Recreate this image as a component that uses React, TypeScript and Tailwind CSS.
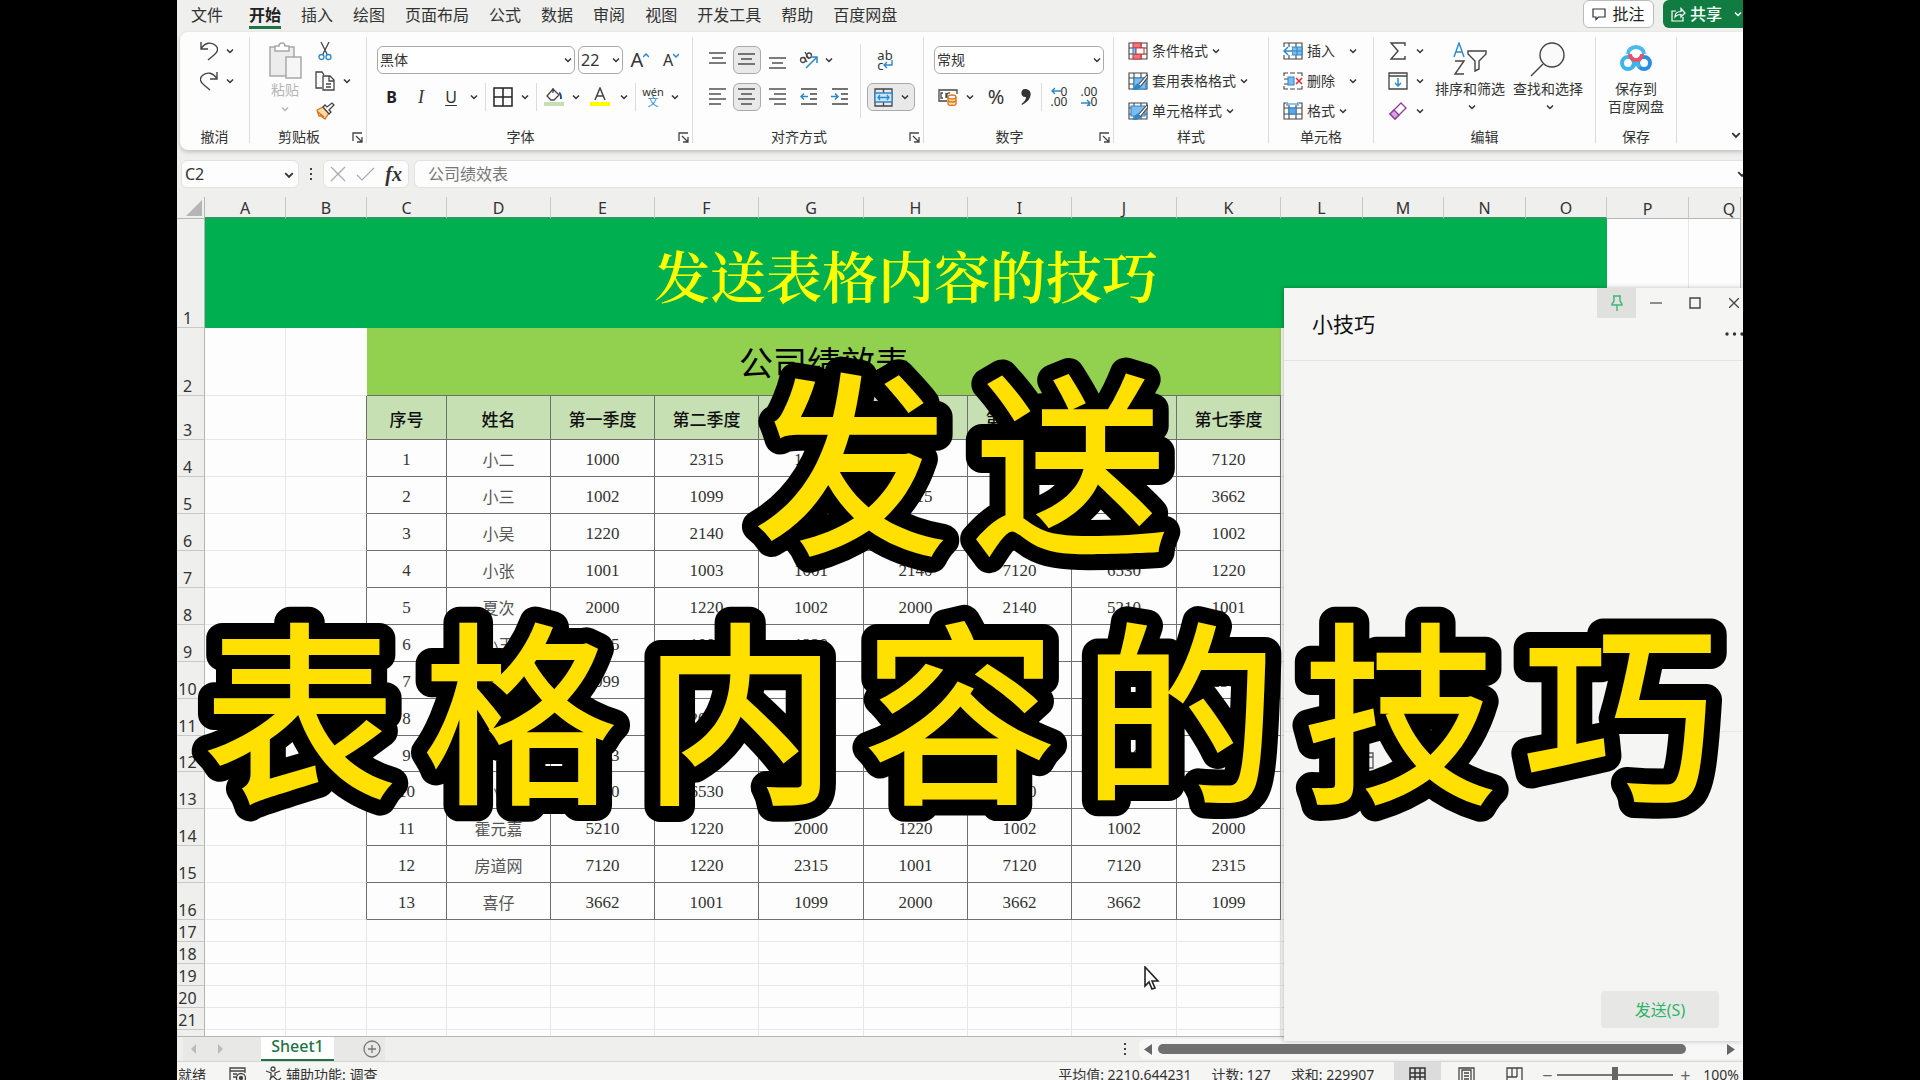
import type { ReactNode } from "react";

const MENU = ["开始", "插入", "绘图", "页面布局", "公式", "数据", "审阅", "视图", "开发工具", "帮助", "百度网盘"];

const COLUMNS = [
  { name: "A", w: 81 }, { name: "B", w: 81 }, { name: "C", w: 80 }, { name: "D", w: 104 },
  { name: "E", w: 104 }, { name: "F", w: 104 }, { name: "G", w: 105 }, { name: "H", w: 104 },
  { name: "I", w: 104 }, { name: "J", w: 105 }, { name: "K", w: 104 }, { name: "L", w: 82 },
  { name: "M", w: 81 }, { name: "N", w: 82 }, { name: "O", w: 81 }, { name: "P", w: 82 }, { name: "Q", w: 81 },
];

const HEADINGS = ["序号", "姓名", "第一季度", "第二季度", "第三季度", "第四季度", "第五季度", "第六季度", "第七季度"];

const RECORDS = [
  ["1", "小二", "1000", "2315", "1000", "2315", "1000", "2315", "7120"],
  ["2", "小三", "1002", "1099", "1002", "2315", "1002", "1099", "3662"],
  ["3", "小吴", "1220", "2140", "1220", "1099", "3662", "7120", "1002"],
  ["4", "小张", "1001", "1003", "1001", "2140", "7120", "6530", "1220"],
  ["5", "夏次", "2000", "1220", "1002", "2000", "2140", "5210", "1001"],
  ["6", "小王", "2315", "1002", "1220", "2315", "1003", "7120", "2000"],
  ["7", "小李", "1099", "1001", "1001", "1099", "1220", "3662", "2315"],
  ["8", "小赵", "2140", "2000", "2000", "2140", "1002", "1002", "1099"],
  ["9", "小孙", "1003", "2315", "2315", "1003", "1001", "1220", "2140"],
  ["10", "小周", "6530", "6530", "1099", "6530", "2000", "1001", "1003"],
  ["11", "霍元嘉", "5210", "1220", "2000", "1220", "1002", "1002", "2000"],
  ["12", "房道网", "7120", "1220", "2315", "1001", "7120", "7120", "2315"],
  ["13", "喜仔", "3662", "1001", "1099", "2000", "3662", "3662", "1099"],
];

const INK = "#444444";
const BLUE = "#2b88c9";

export default function App() {
  return (
    <div className="h-screen overflow-hidden bg-black px-[177px] font-['Noto_Sans','Noto_Sans_CJK_SC',sans-serif] text-[#333]">
      <div className="relative flex h-full flex-col overflow-hidden bg-[#efefee]">
        <MenuBar />
        <Ribbon />
        <FormulaBar />
        <Sheet />
        <SheetTabs />
        <StatusBar />
        <ChatWindow />
        <svg className="absolute top-[966px] left-[967px] z-10" width="17" height="24" viewBox="0 0 17 24">
          <path d="M1 1v19l4-4 3 7 3-1-3-7h6z" fill="#fff" stroke="#222" strokeWidth="1.6" />
        </svg>
      </div>
      <Caption />
    </div>
  );
}

// Big outlined caption; svg text because css text strokes cannot have round joins
function Caption() {
  return (
    <svg viewBox="0 0 1920 1080" textAnchor="middle" fontSize="196"
      className="pointer-events-none absolute inset-0 z-20 h-full w-full fill-[#ffe000] stroke-black font-['Noto_Sans_CJK_SC_Medium','Noto_Sans_CJK_SC',sans-serif] [paint-order:stroke] [stroke-linejoin:round] [stroke-width:32px]">
      <text y="539" x="851 1071">发送</text>
      <text y="788" x="300 520 740 960 1180 1400 1620">表格内容的技巧</text>
    </svg>
  );
}

function Caret({ className = "", size = 8 }: { className?: string; size?: number }) {
  return (
    <svg className={`shrink-0 ${className}`} width={size} height={size} viewBox="0 0 8 8" fill="none" stroke="currentColor" strokeWidth="1.5">
      <path d="M1 2.5l3 3 3-3" />
    </svg>
  );
}

function MenuBar() {
  return (
    <div className="flex h-8 shrink-0 items-start text-base">
      <nav className="flex gap-5 pl-[14px] leading-[30px]">
        <a href="#file" className="mr-[6px]">文件</a>
        {MENU.map((m, i) => (
          <a key={m} href={`#${m}`}
            className={i === 0 ? "h-[29px] border-b-[3px] border-[#217346] font-bold text-[#222]" : ""}>
            {m}
          </a>
        ))}
      </nav>
      <div className="ml-auto flex gap-[9px]">
        <button className="flex h-7 w-[71px] items-center justify-center gap-[6px] rounded-md border border-[#bbb] bg-white text-[#222]">
          <svg width="14" height="14" viewBox="0 0 14 14" fill="none" stroke="#333" strokeWidth="1.2">
            <path d="M1 2h12v8H6.500L4 12.500V10H1z" />
          </svg>
          批注
        </button>
        <button className="flex h-7 w-[80px] items-center gap-1 rounded-l-md bg-[#107c41] pl-2 font-medium whitespace-nowrap text-white">
          <svg className="shrink-0" width="15" height="15" viewBox="0 0 15 15" fill="none" stroke="#fff" strokeWidth="1.2">
            <path d="M5 4H1v10h11v-4M4 10c0-4 3-5.500 6-5.500V1.500l4 4.500-4 4V7.500C7.500 7.500 5.500 8 4 10z" />
          </svg>
          共享
          <Caret className="ml-2" />
        </button>
      </div>
    </div>
  );
}

function Group({ label, launcher, className, pad = "", children }: {
  label: string; launcher?: boolean; className: string; pad?: string; children: ReactNode;
}) {
  return (
    <section className={`flex h-[106px] shrink-0 flex-col border-r border-[#dcdcdc] ${className}`}>
      <div className={`flex-1 ${pad}`}>{children}</div>
      <div className="flex h-3 items-center">
        <span className={`flex-1 text-center leading-3 ${launcher ? "pr-1" : ""}`}>{label}</span>
        {launcher && (
          <button aria-label={`${label}设置`} className="mr-px h-[11px] w-[13px]">
            <svg width="11" height="11" viewBox="0 0 11 11" fill="none" stroke="#444" strokeWidth="1.3">
              <path d="M1 9V1h9M4 4l6 6M10 5v5H5" />
            </svg>
          </button>
        )}
      </div>
    </section>
  );
}

function Tool({ label, w, on, children }: { label: string; w: string; on?: boolean; children: ReactNode }) {
  return (
    <button aria-label={label}
      className={`flex h-7 shrink-0 items-center justify-center rounded-md ${w} ${on ? "border border-[#aaa] bg-[#e9e9e9]" : ""}`}>
      {children}
    </button>
  );
}

function Rule({ className = "mx-[3px]" }: { className?: string }) {
  return <div className={`h-7 w-px shrink-0 bg-[#dcdcdc] ${className}`} />;
}

function Lines({ rows }: { rows: [number, number, number][] }) {
  return (
    <svg width="18" height="18" viewBox="0 0 18 18" stroke={INK} strokeWidth="1.4">
      {rows.map(([x1, x2, y]) => <path key={y} d={`M${x1} ${y}H${x2}`} />)}
    </svg>
  );
}

function GridIcon({ kind }: { kind: "cond" | "table" | "cell" | "insert" | "delete" | "format" }) {
  return (
    <svg width="20" height="18" viewBox="0 0 20 18" fill="none" stroke={INK} strokeWidth="1.1" className="shrink-0">
      {kind !== "delete" && <path d="M1 1h18v16H1zM6 1v16M13 1v16M1 6h18M1 12h18" />}
      {kind === "cond" && (
        <>
          <path d="M5 1h8v5H5zM5 12h8v5H5z" fill="#f2777a" stroke="#d13438" />
          <path d="M5 6h3v6H5z" fill="#8ec3ec" stroke={BLUE} />
          <path d="M8 6h8v6H8z" fill="#fff" stroke="#d13438" />
        </>
      )}
      {(kind === "table" || kind === "cell") && (
        <>
          <path d={kind === "table" ? "M6 6h12v11H6z" : "M3 4h14v10H3z"} fill="#7dbcec" stroke={BLUE} />
          <path d="M19 3l-9 10 2 2 8-10z" fill="#fff" stroke={INK} />
          <path d="M10 12c-3 0-2 4-5 5 3 1 7 0 7-3z" fill={BLUE} stroke={BLUE} />
        </>
      )}
      {kind === "insert" && (
        <>
          <path d="M9 5h10v8H9zM14 5v8M9 9h10" fill="#7dbcec" stroke={BLUE} />
          <path d="M0 5h9v8H0z" fill="#fff" stroke="none" />
          <path d="M9 9H1M5 5L1 9l4 4" stroke={BLUE} strokeWidth="1.5" />
        </>
      )}
      {kind === "delete" && (
        <>
          <path d="M1 4V1h4M7 1h5M14 1h5v3M1 14v3h4M7 17h5M14 17h5v-3M1 7h4M1 12h4" />
          <path d="M5 5h6v8H5z" fill="#7dbcec" stroke={BLUE} />
          <path d="M13 6l6 6M19 6l-6 6" stroke="#e03030" strokeWidth="1.6" />
        </>
      )}
      {kind === "format" && (
        <>
          <path d="M6 6h7v6H6z" fill="#5aa9e6" stroke={BLUE} />
          <path d="M3 0h13v3H3z" fill="#fff" stroke="none" />
          <path d="M4 0v4M15 0v4M4 2h11" stroke={BLUE} />
        </>
      )}
    </svg>
  );
}

function GridTool({ kind, text, wide }: { kind: "cond" | "table" | "cell" | "insert" | "delete" | "format"; text: string; wide?: boolean }) {
  return (
    <button className="flex h-[30px] items-center">
      <GridIcon kind={kind} />
      <span className="ml-1">{text}</span>
      <Caret className={wide ? "ml-[14px]" : "ml-1"} />
    </button>
  );
}

function Combo({ label, value, className }: { label: string; value: string; className: string }) {
  return (
    <div className={`relative h-7 shrink-0 ${className}`}>
      <select aria-label={label} className="h-full w-full appearance-none rounded-md border border-[#aaa] bg-white px-[2px] text-[#333]">
        <option>{value}</option>
      </select>
      <Caret className="pointer-events-none absolute top-[10px] right-[3px]" />
    </div>
  );
}

function Ribbon() {
  return (
    <div className="ml-[3px] flex h-[118px] shrink-0 rounded-l-lg bg-[#fdfdfd] pt-[5px] text-sm shadow-[0_2px_4px_rgba(0,0,0,0.2)]">
      <Group label="撤消" className="w-[70px]">
        <div className="-mt-px flex h-[30px] items-center gap-2 pl-5">
          <Tool label="撤消" w="w-[18px]">
            <svg width="18" height="20" viewBox="0 0 18 20" fill="none" stroke={INK} strokeWidth="1.4">
              <path d="M1 1v7h7M1 8c4-7 10-7 14-4s3 7-1 10l-6 5" />
            </svg>
          </Tool>
          <Caret />
        </div>
        <div className="flex h-[30px] items-center gap-2 pl-5">
          <Tool label="恢复" w="w-[18px]">
            <svg width="18" height="20" viewBox="0 0 18 20" fill="none" stroke={INK} strokeWidth="1.4">
              <path d="M17 1v7h-7M17 8C13 1 7 1 3 4s-3 7 1 10l6 5" />
            </svg>
          </Tool>
          <Caret />
        </div>
      </Group>

      <Group label="剪贴板" launcher className="w-[117px]">
        <div className="flex pl-[19px]">
          <button className="mt-[5px] flex w-8 flex-col items-center text-[#b5b5b5]">
            <svg width="33" height="37" viewBox="0 0 33 37" fill="#ececec" stroke="#a8a8a8" strokeWidth="1.5">
              <path d="M1 5h24v29H1z" />
              <path d="M6 9V4h4c0-4 6-4 6 0h4v5z" fill="#fff" />
              <path d="M17 15h15v21H17z" fill="#f6f6f6" />
            </svg>
            <span className="mt-[2px] w-8 text-center leading-[18px]">粘贴</span>
            <Caret className="mt-[6px]" />
          </button>
          <div className="-mt-px ml-[14px] flex flex-col">
            <div className="flex h-[30px] items-center">
              <Tool label="剪切" w="w-5">
                <svg width="14" height="20" viewBox="0 0 14 20" fill="none" stroke={INK} strokeWidth="1.3">
                  <path d="M3 1l6.500 13M11 1L4.500 14" />
                  <circle cx="3.500" cy="16" r="2.500" stroke={BLUE} />
                  <circle cx="10.500" cy="16" r="2.500" stroke={BLUE} />
                </svg>
              </Tool>
            </div>
            <div className="flex h-[30px] items-center gap-2">
              <Tool label="复制" w="w-5">
                <svg width="20" height="20" viewBox="0 0 20 20" fill="none" stroke={INK} strokeWidth="1.3">
                  <path d="M7 17H1V1h6l2 3M8 5h7l4 4v10H8zM14 5v5h5M11 13h5M11 16h5" />
                </svg>
              </Tool>
              <Caret />
            </div>
            <div className="flex h-[30px] items-center">
              <Tool label="格式刷" w="w-5">
                <svg width="20" height="18" viewBox="0 0 20 18" fill="none" strokeWidth="1.3">
                  <path d="M2 8l6-3 6 6-4 6-4-3-2 0z" fill="#fbd9a8" stroke="#d9741a" />
                  <path d="M5 12l3 3M3 10l6 5" stroke="#d9741a" />
                  <path d="M8 5l2-2 2 2 5-4 2 2-5 5 2 2-2 2z" fill="#fff" stroke={INK} />
                </svg>
              </Tool>
            </div>
          </div>
        </div>
      </Group>

      <Group label="字体" launcher className="w-[326px]" pad="pl-[10px]">
        <div className="mt-[9px] flex items-center gap-[3px]">
          <Combo label="字体" value="黑体" className="w-[198px]" />
          <Combo label="字号" value="22" className="w-[45px] text-base" />
          <Tool label="增大字号" w="w-7">
            <span className="text-xl leading-7">A</span>
            <svg width="6" height="14" viewBox="0 0 6 14" fill="none" stroke={BLUE} strokeWidth="1.5"><path d="M0 4l3-3 3 3" /></svg>
          </Tool>
          <Tool label="减小字号" w="w-7">
            <span className="text-base leading-7">A</span>
            <svg width="6" height="14" viewBox="0 0 6 14" fill="none" stroke={BLUE} strokeWidth="1.5"><path d="M0 1l3 3 3-3" /></svg>
          </Tool>
        </div>
        <div className="mt-[9px] flex items-center">
          <Tool label="加粗" w="w-[29px]"><b className="text-base text-[#222]">B</b></Tool>
          <Tool label="倾斜" w="w-[30px]"><i className="font-['Liberation_Serif',serif] text-lg">I</i></Tool>
          <Tool label="下划线" w="w-[30px]"><u className="text-base underline-offset-2">U</u></Tool>
          <Caret className="mx-1" />
          <Rule />
          <Tool label="边框" w="w-7">
            <svg width="20" height="20" viewBox="0 0 20 20" fill="none" stroke="#222" strokeWidth="1.5"><path d="M1 1h18v18H1zM10 1v18M1 10h18" /></svg>
          </Tool>
          <Caret className="mx-1" />
          <Rule />
          <Tool label="填充颜色" w="w-7">
            <svg width="20" height="20" viewBox="0 0 20 20" fill="none" stroke={INK} strokeWidth="1.3">
              <path d="M9 1v5M9 2l6 6-5 5H7L3 9z" />
              <path d="M15 6c2 0 2 3 2 6" stroke="#1d4f91" strokeWidth="2" />
              <path d="M0 15h20v4H0z" fill="#c6e0b4" stroke="none" />
            </svg>
          </Tool>
          <Caret className="mx-1" />
          <Tool label="字体颜色" w="w-8">
            <svg width="20" height="20" viewBox="0 0 20 20" fill="none" stroke={INK} strokeWidth="1.5">
              <path d="M5 13L10 1l5 12M6.500 9h7" />
              <path d="M0 15h20v4H0z" fill="#ffff00" stroke="none" />
            </svg>
          </Tool>
          <Caret className="mx-1" />
          <Rule />
          <Tool label="拼音" w="w-7">
            <span className="flex flex-col text-center text-[11px] leading-[10px]">
              <span>wén</span><span className="text-[#2b88c9]">文</span>
            </span>
          </Tool>
          <Caret className="ml-1" />
        </div>
      </Group>

      <Group label="对齐方式" launcher className="w-[231px]" pad="pl-[10px]">
        <div className="flex">
          <div>
            <div className="mt-[9px] flex items-center">
              <Tool label="顶端对齐" w="w-[30px]"><Lines rows={[[0, 17, 2], [3, 14, 7], [0, 17, 12]]} /></Tool>
              <Tool label="垂直居中" w="w-7" on><Lines rows={[[0, 17, 3], [3, 14, 8], [0, 17, 13]]} /></Tool>
              <Tool label="底端对齐" w="w-[34px]"><Lines rows={[[0, 17, 7], [3, 14, 12], [0, 17, 17]]} /></Tool>
              <Tool label="方向" w="w-7">
                <svg width="20" height="18" viewBox="0 0 20 18" fill="none" stroke={INK} strokeWidth="1.3">
                  <circle cx="4" cy="9" r="2.500" /><path d="M5 6l3 5M6 1l4 7" /><circle cx="10" cy="4.500" r="2.500" />
                  <path d="M7 17L18 6M12 6h6v6" stroke={BLUE} strokeWidth="1.5" />
                </svg>
              </Tool>
              <Caret className="ml-[2px]" />
            </div>
            <div className="mt-[9px] flex items-center">
              <Tool label="左对齐" w="w-[30px]"><Lines rows={[[0, 17, 1], [0, 12, 6], [0, 17, 11], [0, 12, 16]]} /></Tool>
              <Tool label="居中" w="w-7" on><Lines rows={[[0, 17, 1], [3, 14, 6], [0, 17, 11], [3, 14, 16]]} /></Tool>
              <Tool label="右对齐" w="w-[34px]"><Lines rows={[[0, 17, 1], [5, 17, 6], [0, 17, 11], [5, 17, 16]]} /></Tool>
              <Tool label="减少缩进" w="w-7">
                <svg width="18" height="18" viewBox="0 0 18 18" fill="none" stroke={INK} strokeWidth="1.3">
                  <path d="M1 1h16M10 6h7M10 11h7M1 16h16" /><path d="M8 8.500H1M4 5.500l-3 3 3 3" stroke={BLUE} strokeWidth="1.5" />
                </svg>
              </Tool>
              <Tool label="增加缩进" w="w-[34px]">
                <svg width="18" height="18" viewBox="0 0 18 18" fill="none" stroke={INK} strokeWidth="1.3">
                  <path d="M1 1h16M10 6h7M10 11h7M1 16h16" /><path d="M0 8.500h7M4 5.500l3 3-3 3" stroke={BLUE} strokeWidth="1.5" />
                </svg>
              </Tool>
            </div>
          </div>
          <div className="mt-[7px] ml-[3px] h-[74px] w-px bg-[#dcdcdc]" />
          <div className="ml-[6px]">
            <div className="mt-[9px] flex pl-2">
              <Tool label="自动换行" w="w-5">
                <span className="relative flex flex-col text-left text-[13px] leading-[10px]">
                  <span>ab</span><span>c</span>
                  <svg className="absolute right-0 bottom-0" width="10" height="10" viewBox="0 0 10 10" fill="none" stroke={BLUE} strokeWidth="1.4"><path d="M9 0v5H1M4 2L1 5l3 3" /></svg>
                </span>
              </Tool>
            </div>
            <div className="mt-[9px] flex">
              <Tool label="合并后居中" w="w-12" on>
                <svg width="19" height="19" viewBox="0 0 19 19" fill="none" stroke={INK} strokeWidth="1.3">
                  <path d="M1 1h17v17H1zM9.500 1v4M9.500 14v4" />
                  <path d="M1 5h17v9H1z" fill="#cfe6f8" stroke={BLUE} /><path d="M4 9.500h11M6 7L4 9.500 6 12M13 7l2 2.500-2 2.500" stroke={BLUE} />
                </svg>
                <Caret className="ml-2" />
              </Tool>
            </div>
          </div>
        </div>
      </Group>

      <Group label="数字" launcher className="w-[190px]" pad="pl-[10px]">
        <div className="mt-[9px] flex"><Combo label="数字格式" value="常规" className="w-[170px]" /></div>
        <div className="mt-[9px] flex items-center">
          <Tool label="会计数字格式" w="w-7">
            <svg width="20" height="18" viewBox="0 0 20 18" fill="none" stroke={INK} strokeWidth="1.3">
              <path d="M9 13H1V2h18v4M5 5H3v5h2M12 5c-4-1-4 5-1 5M8 5v5" />
              <path d="M10 9v7c0 2 8 2 8 0V9" fill="#fbd9a8" stroke="#d9741a" /><ellipse cx="14" cy="9" rx="4" ry="2" fill="#fff" stroke="#d9741a" /><path d="M10 12.500c1 2 7 2 8 0" stroke="#d9741a" />
            </svg>
          </Tool>
          <Caret className="mx-1" />
          <Tool label="百分比样式" w="w-9"><span className="text-xl leading-7">%</span></Tool>
          <Tool label="千位分隔样式" w="w-6">
            <svg width="10" height="16" viewBox="0 0 10 16" fill="#333"><path d="M4 0c8 0 8 11-3 16l-.5-1C4 12 5 10 5 8 -1 9-1 0 4 0z" /></svg>
          </Tool>
          <Rule />
          <Tool label="增加小数位数" w="w-7">
            <span className="relative flex flex-col text-right text-xs leading-[10px]">
              <span>0</span><span>.00</span>
              <svg className="absolute top-0 left-0" width="10" height="9" viewBox="0 0 10 9" fill="none" stroke={BLUE} strokeWidth="1.4"><path d="M10 4H1M4 1L1 4l3 3" /></svg>
            </span>
          </Tool>
          <Tool label="减少小数位数" w="w-8">
            <span className="relative flex flex-col text-right text-xs leading-[10px]">
              <span>.00</span><span>.0</span>
              <svg className="absolute bottom-0 left-0" width="10" height="9" viewBox="0 0 10 9" fill="none" stroke={BLUE} strokeWidth="1.4"><path d="M0 5h9M6 2l3 3-3 3" /></svg>
            </span>
          </Tool>
        </div>
      </Group>

      <Group label="样式" className="w-[155px]">
        <div className="-mt-px flex flex-col pl-[14px]">
          <GridTool kind="cond" text="条件格式" />
          <GridTool kind="table" text="套用表格格式" />
          <GridTool kind="cell" text="单元格样式" />
        </div>
      </Group>

      <Group label="单元格" className="w-[105px]">
        <div className="-mt-px flex flex-col pl-[14px]">
          <GridTool kind="insert" text="插入" wide />
          <GridTool kind="delete" text="删除" wide />
          <GridTool kind="format" text="格式" />
        </div>
      </Group>

      <Group label="编辑" className="w-[222px]">
        <div className="flex pl-[14px]">
          <div className="-mt-px flex flex-col">
            <button aria-label="自动求和" className="flex h-[30px] items-center gap-2">
              <svg width="20" height="18" viewBox="0 0 20 18" fill="none" stroke={INK} strokeWidth="1.4"><path d="M17 4V1H3l7 8-7 8h14v-3" /></svg>
              <Caret />
            </button>
            <button aria-label="填充" className="flex h-[30px] items-center gap-2">
              <svg width="20" height="18" viewBox="0 0 20 18" fill="none" stroke={INK} strokeWidth="1.3"><path d="M1 1h18v16H1zM1 4h18" /><path d="M10 6v8M7 11l3 3 3-3" stroke={BLUE} strokeWidth="1.5" /></svg>
              <Caret />
            </button>
            <button aria-label="清除" className="flex h-[30px] items-center gap-2">
              <svg width="20" height="18" viewBox="0 0 20 18" fill="none" stroke="#8e3a9d" strokeWidth="1.3"><path d="M13 1l5 5-11 11-5-5z" /><path d="M6 8l5 5-4 4-5-5z" fill="#d9a3e0" /></svg>
              <Caret />
            </button>
          </div>
          <button className="mt-[5px] ml-[11px] flex w-[70px] flex-col items-center">
            <svg width="34" height="34" viewBox="0 0 34 34" fill="none" stroke={INK} strokeWidth="1.4">
              <path d="M1 15L6 1l5 14M3 10h6" stroke={BLUE} /><path d="M2 19h9L2 32h9" /><path d="M15 9h18v3l-7 7v8l-4 2V19l-7-7z" />
            </svg>
            <span className="mt-1 leading-[18px] whitespace-nowrap">排序和筛选</span>
            <Caret className="mt-[5px] ml-1" />
          </button>
          <button className="mt-[5px] ml-2 flex w-[70px] flex-col items-center">
            <svg width="36" height="36" viewBox="0 0 36 36" fill="#fafafa" stroke={INK} strokeWidth="1.4">
              <circle cx="22" cy="13" r="12" /><path d="M13 22L1 34" />
            </svg>
            <span className="mt-[2px] leading-[18px] whitespace-nowrap">查找和选择</span>
            <Caret className="mt-[5px] ml-1" />
          </button>
        </div>
      </Group>

      <Group label="保存" className="w-[81px]">
        <button className="mt-2 flex w-full flex-col items-center leading-[18px]">
          <svg width="32" height="27" viewBox="0 0 32 27" fill="none" strokeWidth="4">
            <circle cx="8" cy="18" r="6" stroke="#3db4ea" /><circle cx="24" cy="18" r="6" stroke="#2a8fe0" />
            <path d="M12 14l8 8M20 14l-8 8" stroke="#3db4ea" />
            <path d="M8 9a8 7 0 0116 0" stroke="#4ab9ec" strokeWidth="4" />
            <path d="M22 9a6 6 0 01-12 0" stroke="#e8526a" />
          </svg>
          <span className="mt-2">保存到<br />百度网盘</span>
        </button>
      </Group>
      <button aria-label="折叠功能区" className="mt-auto mr-[2px] mb-[10px] ml-auto"><Caret size={10} /></button>
    </div>
  );
}

function FormulaBar() {
  return (
    <div className="mt-[10px] ml-1 flex h-7 shrink-0 items-center">
      <div className="relative h-full w-[118px]">
        <input aria-label="名称框" defaultValue="C2" className="h-full w-full rounded-md border border-[#e2e2e2] bg-[#fdfdfd] px-[3px] text-base" />
        <Caret className="pointer-events-none absolute top-[10px] right-[5px]" size={10} />
      </div>
      <svg className="mx-[10px]" width="4" height="14" viewBox="0 0 4 14" fill="#444"><path d="M1 1h2v2H1zM1 6h2v2H1zM1 11h2v2H1z" /></svg>
      <div className="flex h-full w-[86px] items-center justify-between rounded-md border border-[#e2e2e2] bg-[#fdfdfd] px-[6px]">
        <button aria-label="取消">
          <svg width="16" height="16" viewBox="0 0 16 16" stroke="#aaa" strokeWidth="1.2"><path d="M1 1l14 14M15 1L1 15" /></svg>
        </button>
        <button aria-label="输入">
          <svg width="19" height="14" viewBox="0 0 19 14" fill="none" stroke="#aaa" strokeWidth="1.2"><path d="M1 8l5 5L18 1" /></svg>
        </button>
        <button className="font-['Liberation_Serif',serif] text-xl leading-6 font-bold italic">fx</button>
      </div>
      <div className="relative ml-[5px] h-full flex-1">
        <input aria-label="编辑栏" defaultValue="公司绩效表" className="h-full w-full rounded-l-md border border-r-0 border-[#e2e2e2] bg-[#fdfdfd] px-[13px] pb-[3px] text-base text-[#777]" />
        <Caret className="absolute top-[9px] -right-1" size={10} />
      </div>
    </div>
  );
}

function Sheet() {
  const grid = "border-r border-b border-[#e7e7e7]";
  const ruled = "border-r border-b border-[#6f6f6f] p-0 text-center";
  const side = "border-r border-b border-r-[#b5b5b5] border-b-[#c8c8c8] bg-[#efefee] p-0 pr-[6px] text-center align-bottom leading-[17px] font-normal";
  const rest = (from: number) => COLUMNS.slice(from).map(c => <td key={c.name} className={grid} />);

  return (
    <div className="mt-[9px] mr-[2px] min-h-0 flex-1 overflow-hidden border-r border-[#bbb]">
      <table className="w-[1593px] table-fixed border-separate border-spacing-0 bg-[#fdfdfd] text-base leading-5">
        <colgroup>
          <col style={{ width: 28 }} />
          {COLUMNS.map(c => <col key={c.name} style={{ width: c.w }} />)}
        </colgroup>
        <thead>
          <tr className="h-[22px] bg-[#efefee]">
            <th className="border-r border-b border-[#b5b5b5] p-0">
              <svg className="ml-[9px]" width="16" height="16" viewBox="0 0 16 16"><path d="M16 0v16H0z" fill="#b5b5b5" /></svg>
            </th>
            {COLUMNS.map((c, i) => (
              <th key={c.name}
                className={`border-r border-r-[#c8c8c8] p-0 pt-[2px] leading-[18px] font-normal ${i < 15 ? "border-b-2 border-b-[#2a9d5c]" : "border-b border-b-[#b5b5b5]"}`}>
                {c.name}
              </th>
            ))}
          </tr>
        </thead>
        <tbody>
          <tr className="h-[109px]">
            <th className={side}>1</th>
            <td colSpan={15} className="bg-[#00b050] p-0 text-center font-['Noto_Serif_CJK_SC','Noto_Sans_CJK_SC',serif] text-[56px] leading-[80px] font-semibold text-[#ffff00]">发送表格内容的技巧</td>
            {rest(15)}
          </tr>
          <tr className="h-[68px]">
            <th className={side}>2</th>
            <td className={grid} />
            <td className="border-b border-[#e7e7e7]" />
            <td colSpan={9} className="border-b border-[#6f6f6f] bg-[#92d050] p-0 pt-[2px] text-center text-[34px] leading-[50px] text-black">公司绩效表</td>
            {rest(11)}
          </tr>
          <tr className="h-11">
            <th className={side}>3</th>
            <td className={grid} />
            <td className="border-r border-b border-r-[#6f6f6f] border-b-[#e7e7e7]" />
            {HEADINGS.map(h => <th key={h} className={`${ruled} bg-[#c6e0b4] pt-[2px] font-['Noto_Sans_CJK_SC_Medium','Noto_Sans_CJK_SC',sans-serif] text-[17px] font-normal text-[#111]`}>{h}</th>)}
            {rest(11)}
          </tr>
          {RECORDS.map((r, i) => (
            <tr key={r[0]} className={i === 8 ? "h-9" : "h-[37px]"}>
              <th className={side}>{i + 4}</th>
              <td className={grid} />
              <td className="border-r border-b border-r-[#6f6f6f] border-b-[#e7e7e7]" />
              {r.map((v, j) => (
                <td key={j} className={`${ruled} pt-1 ${j === 1 ? "text-base text-[#555]" : "font-['Liberation_Serif',serif] text-[17px] text-[#333]"}`}>{v}</td>
              ))}
              {rest(11)}
            </tr>
          ))}
          {[17, 18, 19, 20, 21].map(n => (
            <tr key={n} className="h-[22px]">
              <th className={side}>{n}</th>
              {rest(0)}
            </tr>
          ))}
          <tr className="h-[22px]">
            <th className={side} />
            {rest(0)}
          </tr>
        </tbody>
      </table>
    </div>
  );
}

function SheetTabs() {
  return (
    <div className="flex h-[26px] shrink-0 items-start border-y border-t-[#b5b5b5] border-b-[#d5d5d5] text-base">
      <div className="ml-[6px] flex h-full w-[78px] items-center gap-[22px] bg-[#e8e8e7] pl-2">
        <button aria-label="上一张"><svg width="5" height="10" viewBox="0 0 5 10" fill="#bbb"><path d="M5 0v10L0 5z" /></svg></button>
        <button aria-label="下一张"><svg width="5" height="10" viewBox="0 0 5 10" fill="#bbb"><path d="M0 0v10l5-5z" /></svg></button>
      </div>
      <button className="flex h-6 w-[73px] justify-center border-b-2 border-[#217346] bg-white leading-[18px] font-medium text-[#217346]">Sheet1</button>
      <div className="flex h-full w-[51px] items-center justify-end bg-[#e8e8e7] pr-1">
        <button aria-label="新工作表">
          <svg width="18" height="18" viewBox="0 0 18 18" fill="none" stroke="#777" strokeWidth="1.3"><circle cx="9" cy="9" r="8" /><path d="M9 5v8M5 9h8" /></svg>
        </button>
      </div>
      <div className="ml-auto flex h-full items-center">
        <svg className="mr-3" width="4" height="14" viewBox="0 0 4 14" fill="#444"><path d="M1 1h2v2H1zM1 6h2v2H1zM1 11h2v2H1z" /></svg>
        <div className="flex h-5 w-[604px] items-center rounded-l-md bg-[#f7f7f7] pl-[5px]">
          <svg width="8" height="11" viewBox="0 0 8 11" fill="#666"><path d="M8 0v11L0 5.500z" /></svg>
          <div className="ml-[6px] h-[10px] w-[528px] rounded-full bg-[#707070]" />
          <svg className="mr-2 ml-auto" width="8" height="11" viewBox="0 0 8 11" fill="#666"><path d="M0 0v11l8-5.500z" /></svg>
        </div>
      </div>
    </div>
  );
}

function StatusBar() {
  return (
    <div className="h-[18px] shrink-0 overflow-hidden bg-[#f5f5f4] text-sm">
      <div className="flex h-[26px] items-center whitespace-nowrap">
        <span className="ml-px">就绪</span>
        <svg className="ml-[23px]" width="18" height="16" viewBox="0 0 18 16" fill="none" stroke={INK} strokeWidth="1.3"><path d="M8 15H1V1h15v5M1 4h15M4 7h4M4 10h3" /><circle cx="12" cy="11" r="4.500" /><circle cx="12" cy="11" r="1.500" fill={INK} /></svg>
        <svg className="ml-[18px]" width="18" height="18" viewBox="0 0 18 18" fill="none" stroke={INK} strokeWidth="1.3"><circle cx="8" cy="3" r="2" /><path d="M1 5l5 2v4l-2 6M15 5l-5 2v3M6 12l2-2 2 2M10 12l6 5M16 12l-6 5" /></svg>
        <span className="ml-[3px]">辅助功能: 调查</span>
        <div className="ml-auto flex items-center gap-5">
          <span>平均值: 2210.644231</span>
          <span>计数: 127</span>
          <span>求和: 229907</span>
        </div>
        <div className="ml-5 flex h-full items-center">
          <button aria-label="普通" className="flex h-full w-[47px] items-center justify-center bg-[#dcdcdc]">
            <svg width="17" height="16" viewBox="0 0 17 16" fill="none" stroke="#333" strokeWidth="1.5"><path d="M1 1h15v14H1zM6 1v14M11 1v14M1 6h15M1 10h15" /></svg>
          </button>
          <button aria-label="页面布局" className="flex w-[50px] items-center justify-center">
            <svg width="17" height="16" viewBox="0 0 17 16" fill="none" stroke="#444" strokeWidth="1.3"><path d="M1 1h15v14H1zM4 3h9v12H4zM6 6h5M6 9h5M6 12h5" /></svg>
          </button>
          <button aria-label="分页预览" className="flex w-[46px] items-center justify-center">
            <svg width="17" height="16" viewBox="0 0 17 16" fill="none" stroke="#444" strokeWidth="1.3"><path d="M1 1h15v14H1zM6 1v9M11 1v9M1 10h10" /></svg>
          </button>
        </div>
        <button aria-label="缩小" className="w-5 text-lg leading-6 text-[#666]">−</button>
        <div className="relative h-4 w-[116px]">
          <div className="absolute top-[7px] h-[2px] w-full bg-[#777]" />
          <div className="absolute top-0 left-[55px] h-4 w-[6px] bg-[#666]" />
          <input type="range" aria-label="缩放" className="absolute inset-0 w-full opacity-0" />
        </div>
        <button aria-label="放大" className="w-6 text-lg leading-6 text-[#666]">+</button>
        <span className="mr-1 ml-[6px]">100%</span>
      </div>
    </div>
  );
}

function ChatWindow() {
  return (
    <div className="absolute top-[288px] right-0 flex h-[753px] w-[459px] flex-col bg-[#f5f5f4] shadow-[-1px_0_5px_rgba(0,0,0,0.25)]">
      <div className="flex h-[73px] shrink-0 border-b border-[#e3e3e3]">
        <h2 className="mt-5 ml-7 text-[21px] leading-8 text-[#111]">小技巧</h2>
        <div className="ml-auto flex flex-col items-end">
          <div className="flex h-[30px] items-center">
            <button aria-label="置顶" className="flex h-full w-[39px] items-center justify-center bg-[#e0e0df]">
              <svg width="12" height="16" viewBox="0 0 12 16" fill="none" stroke="#3bb877" strokeWidth="1.4"><path d="M2 1h8M3 1v5L1 9v1h10V9L9 6V1M6 10v6" /></svg>
            </button>
            <button aria-label="最小化" className="flex w-[39px] justify-center">
              <svg width="12" height="12" viewBox="0 0 12 12" stroke="#555" strokeWidth="1.3"><path d="M0 6h12" /></svg>
            </button>
            <button aria-label="最大化" className="flex w-[39px] justify-center">
              <svg width="12" height="12" viewBox="0 0 12 12" fill="none" stroke="#444" strokeWidth="1.4"><path d="M1 1h10v10H1z" /></svg>
            </button>
            <button aria-label="关闭" className="flex w-[29px] justify-end pr-1">
              <svg width="10" height="10" viewBox="0 0 10 10" stroke="#444" strokeWidth="1.3"><path d="M0 0l10 10M10 0L0 10" /></svg>
            </button>
          </div>
          <button aria-label="更多" className="mt-[13px]">
            <svg width="18" height="6" viewBox="0 0 18 6" fill="#333"><circle cx="2" cy="3" r="1.700" /><circle cx="9.500" cy="3" r="1.700" /><circle cx="17" cy="3" r="1.700" /></svg>
          </button>
        </div>
      </div>
      <div className="flex-1" />
      <div className="flex h-[310px] shrink-0 flex-col border-t border-[#e8e8e8]">
        <svg className="mt-5 ml-[70px]" width="20" height="17" viewBox="0 0 20 17" fill="none" stroke="#555" strokeWidth="1.3"><path d="M1 1h18v15H1zM1 5h18" /></svg>
        <button className="mt-auto mr-6 mb-[13px] ml-auto h-[37px] w-[118px] rounded bg-[#e7e8e6] text-base text-[#2fb36a]">发送(S)</button>
      </div>
    </div>
  );
}
